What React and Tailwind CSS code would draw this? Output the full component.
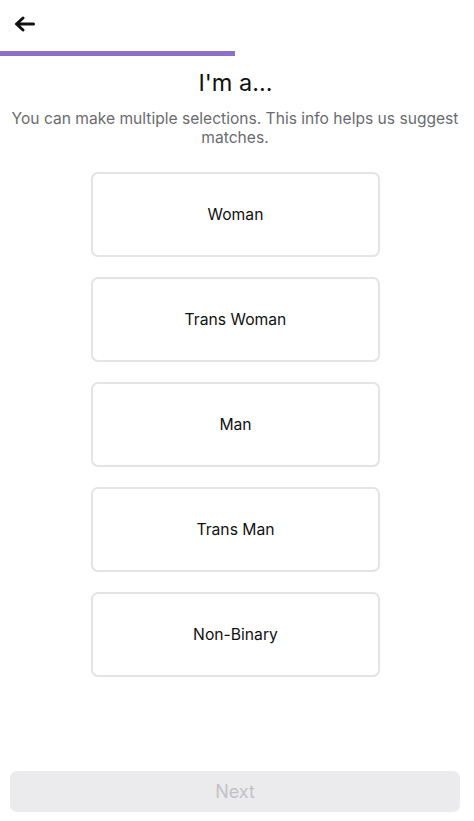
import React from "react";

const options = ["Woman", "Trans Woman", "Man", "Trans Man", "Non-Binary"];

export default function App() {
  return (
    <div
      className="flex h-[821px] w-full flex-col bg-white"
      style={{ fontFamily: "Inter, 'Noto Sans', sans-serif" }}
    >
      <div className="flex h-[46px] items-center pl-[14px] pt-[1px]">
        <svg width="21" height="16" viewBox="0 0 21 16" fill="none">
          <path
            d="M19.5 8H3M9 2L2.5 8L9 14"
            stroke="#111111"
            strokeWidth="3"
            strokeLinecap="round"
            strokeLinejoin="round"
          />
        </svg>
      </div>
      <div className="mt-[5px] h-[5px] w-[235px] bg-[#8c6fc6]" />
      <h1 className="mt-[13px] pr-[3px] text-center text-[23.5px] leading-[28px] font-normal text-[#111111]">
        I'm a...
      </h1>
      <p className="mt-[12px] pl-[8px] pr-[12px] text-center text-[15.6px] leading-[19px] text-[#6b6b70]">
        You can make multiple selections. This info helps us suggest matches.
      </p>
      <div className="mt-[25px] flex flex-col items-center gap-[20px] pr-[3px]">
        {options.map((o) => (
          <button
            key={o}
            className="flex h-[85px] w-[289px] items-center justify-center rounded-[7px] border-2 border-[#e4e4e6] bg-white text-[15.7px] text-[#111111]"
          >
            {o}
          </button>
        ))}
      </div>
      <div className="mt-auto pl-[10px] pr-[14px] pb-[9px]">
        <button className="flex h-[41px] w-full items-center justify-center rounded-[7px] bg-[#ebebed] text-[18px] text-[#c2c2c6]">
          Next
        </button>
      </div>
    </div>
  );
}
